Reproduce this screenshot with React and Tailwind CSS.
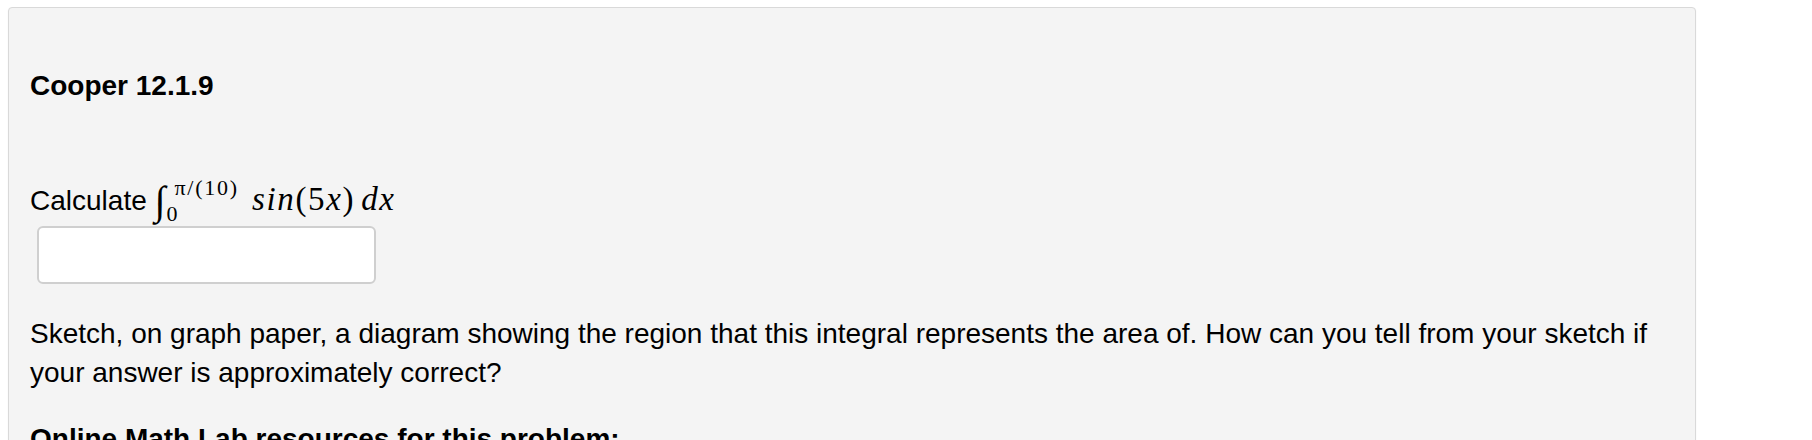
export default function App() {
  return (
    <div className="min-h-screen bg-white pt-[7px] pl-[8px] font-['Liberation_Sans',Arial,sans-serif] text-black">
      <div className="h-[520px] w-[1688px] rounded-[4px] border border-[#d9d9d9] bg-[#f4f4f4] px-[21px] shadow-[0_1px_2px_rgba(0,0,0,0.06)]">
        <h3 className="pt-[61px] text-[28px] font-bold leading-[34px]">Cooper 12.1.9</h3>

        {/* prompt with the integral, typeset inline */}
        <div className="mt-[78px] h-[39px] whitespace-nowrap text-[28px] leading-[39px]">
          Calculate{' '}
          <span className="font-['Liberation_Serif',serif]">
            <span className="relative top-[4px] text-[40px] italic leading-[0px]">∫</span>
            <span className="relative top-[-15px] inline-flex flex-col text-[22px] leading-[26px] tracking-[0.08em]">
              <span className="ml-[9px]">π/(10)</span>
              <span className="ml-[1px]">0</span>
            </span>
            <span className="ml-[13px] text-[33px] leading-[0px] tracking-[0.05em]">
              <i>sin</i>(5<i>x</i>)<span className="ml-[6px]"><i>dx</i></span>
            </span>
          </span>
        </div>

        <input
          type="text"
          className="mt-[6px] ml-[7px] block h-[58px] w-[339px] rounded-[6px] border-2 border-[#cfcfcf] bg-white px-3 text-[26px] outline-none"
        />

        <p className="mt-[30px] text-[28px] leading-[39px]">
          Sketch, on graph paper, a diagram showing the region that this integral represents the area of. How can you
          tell from your sketch if your answer is approximately correct?
        </p>

        <h4 className="mt-[27px] text-[28px] font-bold leading-[39px]">Online Math Lab resources for this problem:</h4>
      </div>
    </div>
  );
}
